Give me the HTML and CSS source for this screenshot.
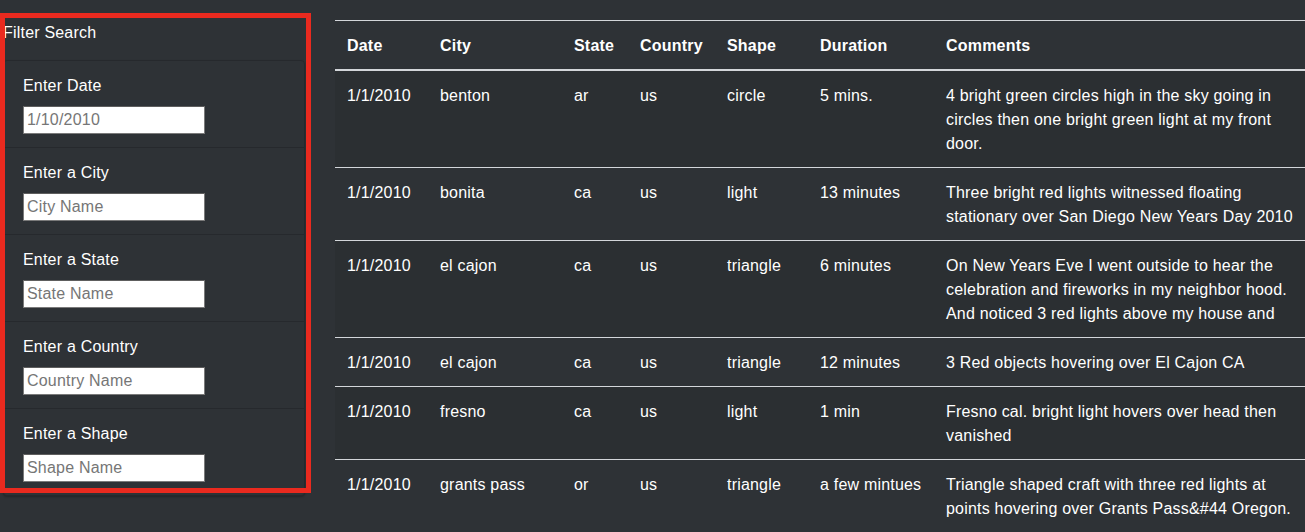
FILE: index.html
```html
<!DOCTYPE html>
<html lang="en">
<head>
<meta charset="utf-8">
<title>UFO Sightings</title>
<link rel="stylesheet" href="styles.css">
</head>
<body>
<div class="page">
  <aside class="sidebar">
    <div class="filter-title">Filter Search</div>
    <ul class="filters">
      <li class="filter">
        <label class="filter-label" for="datetime">Enter Date</label>
        <input class="filter-input" id="datetime" type="text" placeholder="1/10/2010">
      </li>
      <li class="filter">
        <label class="filter-label" for="city">Enter a City</label>
        <input class="filter-input" id="city" type="text" placeholder="City Name">
      </li>
      <li class="filter">
        <label class="filter-label" for="state">Enter a State</label>
        <input class="filter-input" id="state" type="text" placeholder="State Name">
      </li>
      <li class="filter">
        <label class="filter-label" for="country">Enter a Country</label>
        <input class="filter-input" id="country" type="text" placeholder="Country Name">
      </li>
      <li class="filter">
        <label class="filter-label" for="shape">Enter a Shape</label>
        <input class="filter-input" id="shape" type="text" placeholder="Shape Name">
      </li>
    </ul>
  </aside>
  <main class="results">
    <table class="ufo-table">
      <colgroup>
        <col class="c-date"><col class="c-city"><col class="c-state"><col class="c-country"><col class="c-shape"><col class="c-duration"><col class="c-comments">
      </colgroup>
      <thead>
        <tr><th>Date</th><th>City</th><th>State</th><th>Country</th><th>Shape</th><th>Duration</th><th>Comments</th></tr>
      </thead>
      <tbody>
        <tr><td>1/1/2010</td><td>benton</td><td>ar</td><td>us</td><td>circle</td><td>5 mins.</td><td class="comment">4 bright green circles high in the sky going in<br>circles then one bright green light at my front<br>door.</td></tr>
        <tr><td>1/1/2010</td><td>bonita</td><td>ca</td><td>us</td><td>light</td><td>13 minutes</td><td class="comment">Three bright red lights witnessed floating<br>stationary over San Diego New Years Day 2010</td></tr>
        <tr><td>1/1/2010</td><td>el cajon</td><td>ca</td><td>us</td><td>triangle</td><td>6 minutes</td><td class="comment">On New Years Eve I went outside to hear the<br>celebration and fireworks in my neighbor hood.<br>And noticed 3 red lights above my house and</td></tr>
        <tr><td>1/1/2010</td><td>el cajon</td><td>ca</td><td>us</td><td>triangle</td><td>12 minutes</td><td class="comment">3 Red objects hovering over El Cajon CA</td></tr>
        <tr><td>1/1/2010</td><td>fresno</td><td>ca</td><td>us</td><td>light</td><td>1 min</td><td class="comment">Fresno cal. bright light hovers over head then<br>vanished</td></tr>
        <tr><td>1/1/2010</td><td>grants pass</td><td>or</td><td>us</td><td>triangle</td><td>a few mintues</td><td class="comment">Triangle shaped craft with three red lights at<br>points hovering over Grants Pass&amp;#44 Oregon.</td></tr>
      </tbody>
    </table>
  </main>
</div>
</body>
</html>
```

FILE: styles.css
```css
*, *::before, *::after { box-sizing: border-box; }

html, body {
  margin: 0;
  padding: 0;
  background: #2e3236;
  overflow: hidden;
}

body {
  font-family: "Liberation Sans", Arial, sans-serif;
  font-size: 16px;
  line-height: 24px;
  color: #ffffff;
  letter-spacing: 0.2px;
}

.page {
  display: flex;
  align-items: flex-start;
  gap: 30px;
  width: 1305px;
  height: 532px;
  overflow: hidden;
}

.sidebar {
  position: relative;
  flex: 0 0 305px;
  padding: 21px 0 0 3px;
}

.sidebar::after {
  content: "";
  position: absolute;
  top: 13px;
  left: 0;
  width: 311px;
  height: 480px;
  border: 5px solid #ea2a1f;
  pointer-events: none;
}

.filter-title {
  margin-bottom: 15px;
}

.filters {
  list-style: none;
  margin: 0;
  padding: 0;
  border-radius: 4px;
  box-shadow: 0 1px 2px rgba(0, 0, 0, 0.25);
}

.filter {
  display: flex;
  flex-direction: column;
  align-items: flex-start;
  padding: 13px 19px 13px;
  border: 1px solid rgba(0, 0, 0, 0.16);
  border-top: 0;
}

.filter:first-child {
  border-top: 1px solid rgba(0, 0, 0, 0.16);
  border-radius: 4px 4px 0 0;
}

.filter:last-child {
  border-radius: 0 0 4px 4px;
}

.filter-label {
  margin-bottom: 8px;
}

.filter-input {
  width: 182px;
  height: 28px;
  margin: 0;
  padding: 0 3px;
  border: 1px solid #7a7a7a;
  border-top-color: #5e5e5e;
  background: #ffffff;
  color: #222;
  font-family: "Liberation Sans", Arial, sans-serif;
  font-size: 16px;
  letter-spacing: 0.2px;
}

.filter-input::placeholder {
  color: #767676;
}

.results {
  flex: 0 0 979px;
}

.ufo-table {
  width: 979px;
  margin-top: 20px;
  border-collapse: collapse;
  table-layout: fixed;
}

.c-date { width: 93px; }
.c-city { width: 134px; }
.c-state { width: 66px; }
.c-country { width: 87px; }
.c-shape { width: 93px; }
.c-duration { width: 126px; }
.c-comments { width: 380px; }

.ufo-table th,
.ufo-table td {
  padding: 13px 12px 11px;
  text-align: left;
  white-space: nowrap;
  border-top: 1px solid #d3d6da;
}

.ufo-table th {
  font-weight: bold;
  vertical-align: bottom;
  border-bottom: 2px solid #d3d6da;
}

.ufo-table td {
  vertical-align: top;
}

.ufo-table tbody tr:nth-of-type(odd) {
  background: rgba(0, 0, 0, 0.06);
}
```
